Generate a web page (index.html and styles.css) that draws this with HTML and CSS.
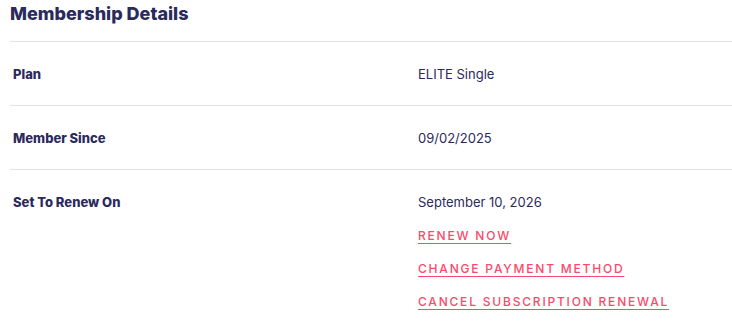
FILE: index.html
```html
<!DOCTYPE html>
<html>
<head>
  <title>Membership Details</title>
  <link rel="stylesheet" href="styles.css">
</head>
<body>
  <div class="membership">
    <h2 class="title">Membership Details</h2>
    <div class="row">
      <div class="label">Plan</div>
      <div class="value">ELITE Single</div>
    </div>
    <div class="row">
      <div class="label">Member Since</div>
      <div class="value">09/02/2025</div>
    </div>
    <div class="row last">
      <div class="label">Set To Renew On</div>
      <div class="value">
        <div>September 10, 2026</div>
        <div class="links">
          <a href="#" class="action">Renew Now</a>
          <a href="#" class="action">Change Payment Method</a>
          <a href="#" class="action">Cancel Subscription Renewal</a>
        </div>
      </div>
    </div>
  </div>
</body>
</html>
```

FILE: styles.css
```css
html, body {
  margin: 0;
  padding: 0;
  background: #fff;
  font-family: Inter, "Noto Sans", sans-serif;
  color: #2b2a5c;
}

.membership {
  padding-left: 10px;
}

.title {
  margin: 0;
  font-size: 18px;
  font-weight: 800;
  line-height: 28px;
  height: 41px;
  border-bottom: 1px solid #e4e4ec;
}

.row {
  display: grid;
  grid-template-columns: 405px 1fr;
  padding: 24px 3px 22px;
  line-height: 17px;
  font-size: 13px;
  border-bottom: 1px solid #e4e4ec;
}

.row.last {
  border-bottom: none;
}

.label {
  font-weight: 800;
}

.links {
  display: flex;
  flex-direction: column;
  gap: 16px;
  margin-top: 16px;
}

.action {
  align-self: flex-start;
  color: #f84a6b;
  font-size: 12px;
  font-weight: 500;
  letter-spacing: 1.8px;
  text-transform: uppercase;
  text-decoration: underline;
  text-underline-offset: 3px;
}
```
